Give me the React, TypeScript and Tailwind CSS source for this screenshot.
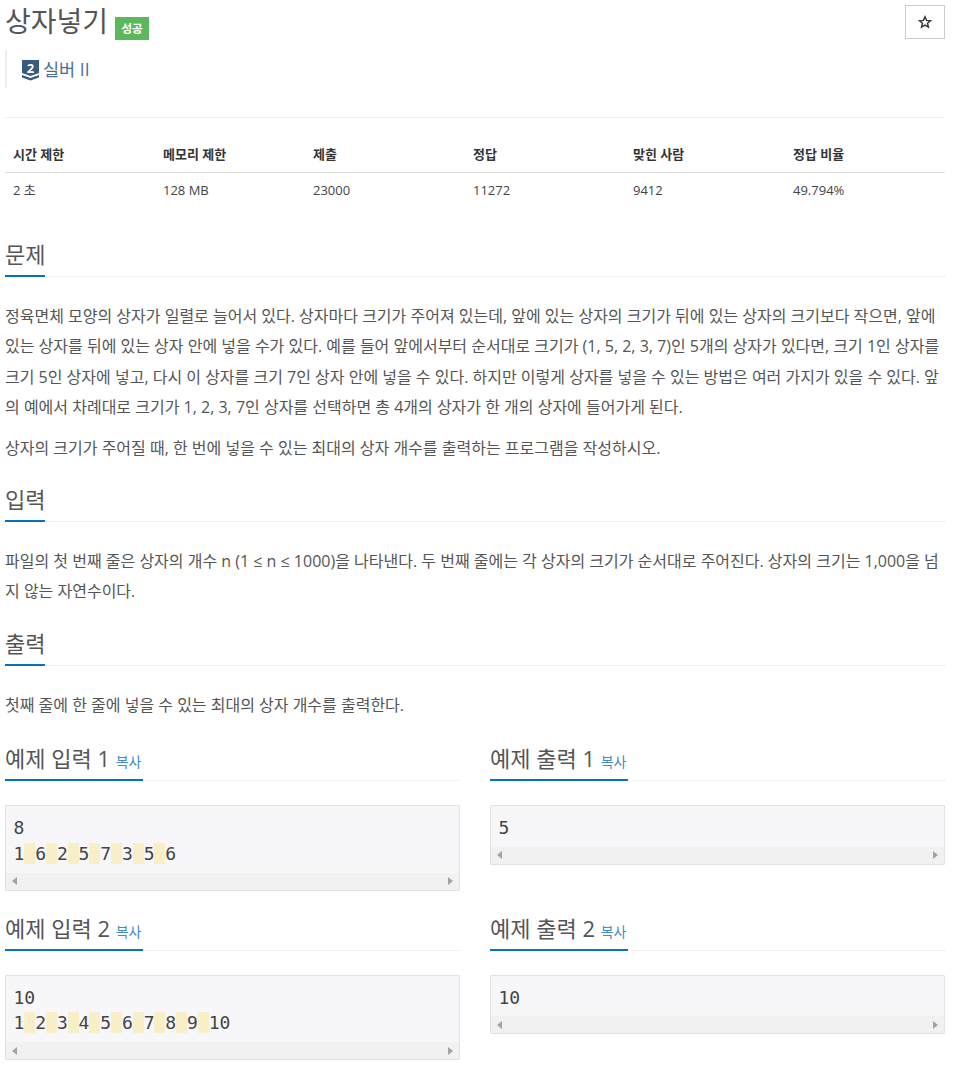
const sans = "font-['Open_Sans','Noto_Sans_CJK_KR',sans-serif]";

function Heading({ children }: { children: React.ReactNode }) {
  return (
    <div className="relative h-[36px] border-b border-dotted border-[#e5e5e5]">
      <h2 className="text-[22px] leading-[27px] font-normal text-[#555] whitespace-nowrap">{children}</h2>
      <div className="absolute left-0 bottom-[-1px] h-[2px] w-10 bg-[#0076c0]" />
    </div>
  );
}

function Scrollbar() {
  return (
    <div className="h-[17px] bg-[#f1f1f1] flex items-center justify-between px-[6px]">
      <svg width="5" height="8" viewBox="0 0 5 8"><path d="M5 0V8L0 4Z" fill="#a3a3a3" /></svg>
      <svg width="5" height="8" viewBox="0 0 5 8"><path d="M0 0V8L5 4Z" fill="#a3a3a3" /></svg>
    </div>
  );
}

function Sample({ title, lines }: { title: string; lines: string[] }) {
  return (
    <div>
      <div className="relative h-[36px] border-b border-dotted border-[#e5e5e5]">
        <h2 className="text-[22px] leading-[27px] font-normal text-[#555] whitespace-nowrap">
          {title} <a className="text-[14px] text-[#428bca]">복사</a>
        </h2>
        <div className="absolute left-0 bottom-[-1px] h-[2px] w-[138px] bg-[#0076c0]" />
      </div>
      <div className="mt-[24px] border border-[#e1e1e8] bg-[#f7f7f9] rounded-[1px]">
        <pre className="pl-[7.5px] pr-[9px] pt-[9px] pb-[6px] text-[18px] leading-[25.71px] text-[#444] font-['DejaVu_Sans_Mono',monospace]">
          {lines.map((l, i) => (
            <div key={i}>
              {l.split(" ").map((t, j, a) => (
                <span key={j}>
                  {t}
                  {j < a.length - 1 && <span className="bg-[#f8eec7]"> </span>}
                </span>
              ))}
            </div>
          ))}
        </pre>
        <Scrollbar />
      </div>
    </div>
  );
}

const cols = ["시간 제한", "메모리 제한", "제출", "정답", "맞힌 사람", "정답 비율"];
const vals = ["2 초", "128 MB", "23000", "11272", "9412", "49.794%"];
const widths = ["w-[150px]", "w-[150px]", "w-[160px]", "w-[160px]", "w-[160px]", "w-[160px]"];
const body = "mt-[24px] text-[16px] leading-[30.4px] text-[#555] whitespace-nowrap";

export default function App() {
  return (
    <div className={`w-[958px] h-[1073px] overflow-hidden bg-white text-[#333] px-[5px] ${sans}`}>
      <div className="w-[940px]">
        <div className="flex justify-between items-start">
          <h1 className="text-[28px] leading-[42px] font-normal text-[#555] flex items-center whitespace-nowrap">
            상자넣기
            <span className="ml-[7px] mt-[15px] bg-[#5cb85c] text-white text-[11.5px] font-bold leading-[23px] h-[23px] w-[34px] text-center">성공</span>
          </h1>
          <button className="mt-[5px] w-[40px] h-[34px] border border-[#ccc] flex items-center justify-center text-[#333]">
            <svg width="14" height="14" viewBox="0 0 24 24" fill="none" stroke="#333" strokeWidth="2.4"><path d="M12 3l2.7 6.2 6.8.6-5.2 4.4 1.6 6.6-5.9-3.5-5.9 3.5 1.6-6.6-5.2-4.4 6.8-.6z" /></svg>
          </button>
        </div>
        <div className="mt-[8px] h-[38px] border-l-[2px] border-[#eee] pl-[15px] flex items-center text-[17.5px] text-[#4b6f92]">
          <svg width="17" height="21" viewBox="0 0 17 21" className="mr-[4px] mt-[2px]">
            <path d="M0 0H17V13L8.5 16L0 13Z" fill="#3a5a7c" />
            <path d="M0 15L8.5 18L17 15V17.5L8.5 20.5L0 17.5Z" fill="#3a5a7c" />
            <text x="8.5" y="12.5" textAnchor="middle" fontSize="13" fontWeight="700" fill="#fff" fontFamily="Open Sans">2</text>
          </svg>
          실버 II
        </div>
        <div className="mt-[29px] border-t border-[#eee]" />
        <table className="mt-[20px] w-full text-[13px] border-collapse">
          <thead>
            <tr className="border-b border-[#ddd] h-[34px]">
              {cols.map((c, i) => (
                <th key={c} className={`text-left font-bold pl-[8px] ${widths[i]}`}>{c}</th>
              ))}
            </tr>
          </thead>
          <tbody>
            <tr className="h-[36px]">
              {vals.map((v) => (
                <td key={v} className="pl-[8px] text-[#444]">{v}</td>
              ))}
            </tr>
          </tbody>
        </table>

        <section className="mt-[33px]">
          <Heading>문제</Heading>
          <div className={body}>
            <div>정육면체 모양의 상자가 일렬로 늘어서 있다. 상자마다 크기가 주어져 있는데, 앞에 있는 상자의 크기가 뒤에 있는 상자의 크기보다 작으면, 앞에</div>
            <div>있는 상자를 뒤에 있는 상자 안에 넣을 수가 있다. 예를 들어 앞에서부터 순서대로 크기가 (1, 5, 2, 3, 7)인 5개의 상자가 있다면, 크기 1인 상자를</div>
            <div>크기 5인 상자에 넣고, 다시 이 상자를 크기 7인 상자 안에 넣을 수 있다. 하지만 이렇게 상자를 넣을 수 있는 방법은 여러 가지가 있을 수 있다. 앞</div>
            <div>의 예에서 차례대로 크기가 1, 2, 3, 7인 상자를 선택하면 총 4개의 상자가 한 개의 상자에 들어가게 된다.</div>
            <div className="mt-[10px]">상자의 크기가 주어질 때, 한 번에 넣을 수 있는 최대의 상자 개수를 출력하는 프로그램을 작성하시오.</div>
          </div>
        </section>
        <section className="mt-[23px]">
          <Heading>입력</Heading>
          <div className={body}>
            <div>파일의 첫 번째 줄은 상자의 개수 n (1 ≤ n ≤ 1000)을 나타낸다. 두 번째 줄에는 각 상자의 크기가 순서대로 주어진다. 상자의 크기는 1,000을 넘</div>
            <div>지 않는 자연수이다.</div>
          </div>
        </section>
        <section className="mt-[23px]">
          <Heading>출력</Heading>
          <div className={body}>첫째 줄에 한 줄에 넣을 수 있는 최대의 상자 개수를 출력한다.</div>
        </section>

        <div className="mt-[25px] grid grid-cols-2 gap-x-[30px]">
          <Sample title="예제 입력 1" lines={["8", "1 6 2 5 7 3 5 6"]} />
          <Sample title="예제 출력 1" lines={["5"]} />
        </div>
        <div className="mt-[24px] grid grid-cols-2 gap-x-[30px]">
          <Sample title="예제 입력 2" lines={["10", "1 2 3 4 5 6 7 8 9 10"]} />
          <Sample title="예제 출력 2" lines={["10"]} />
        </div>
      </div>
    </div>
  );
}
